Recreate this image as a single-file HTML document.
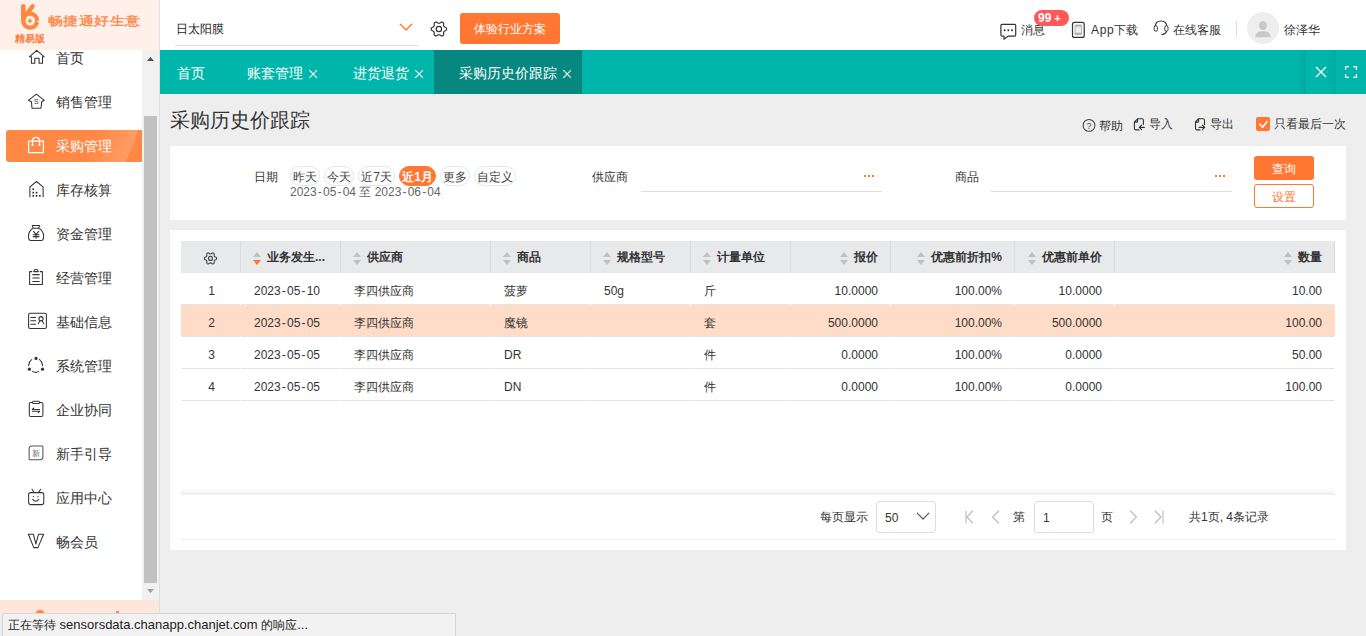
<!DOCTYPE html>
<html><head><meta charset="utf-8">
<style>
*{box-sizing:border-box;margin:0;padding:0}
html,body{width:1366px;height:636px;overflow:hidden;background:#eeeeee;font-family:"Liberation Sans",sans-serif;color:#333;font-size:12px}
.a{position:absolute;white-space:nowrap}
#logo{left:0;top:0;width:159px;height:50px;background:#fff1ea}
#hdr{left:160px;top:0;width:1206px;height:50px;background:#fff}
#vline{left:159px;top:0;width:1px;height:50px;background:#e3e3e3}
#side{left:0;top:50px;width:142px;height:550px;background:#fff}
#sbar{left:142px;top:50px;width:17px;height:550px;background:#f1f1f1}
#sthumb{left:144px;top:116px;width:13px;height:467px;background:#c1c1c1}
#sline{left:159px;top:50px;width:1px;height:563px;background:#dedede}
#sfoot{left:0;top:600px;width:159px;height:13px;background:#ffe6da}
.mi{left:56px;font-size:14px;line-height:20px;color:#333}
.ic{left:28px;width:16px;height:16px}
#act{left:6px;top:130px;width:136px;height:32px;border-radius:3px 0 0 3px;background:radial-gradient(circle 150px at -12.3px -40px,rgba(255,255,255,0) 112px,rgba(255,255,255,0.17) 149.2px,rgba(255,255,255,0) 150.2px),#ff8844}
#tabs{left:160px;top:50px;width:1206px;height:44px;background:#00b5aa}
.tab{top:63px;font-size:14px;line-height:20px;color:#fff}
#acttab{left:434px;top:50px;width:148px;height:44px;background:#06877f}
#panel1{left:170px;top:146px;width:1176px;height:74px;background:#fff}
#panel2{left:170px;top:230px;width:1176px;height:320px;background:#fff}
.pill{top:166px;height:20px;border:1px solid #d2eeee;border-radius:10px;font-size:12px;line-height:19px;padding-top:1px;text-align:center;color:#444}
table{position:absolute;left:181px;top:241px;border-collapse:separate;border-spacing:0;table-layout:fixed;width:1154px;font-size:12px}
th{height:32px;box-sizing:border-box;background:#e8e9eb;font-weight:bold;color:#333;border-right:1px solid #d9d9d9;padding:0 12px;text-align:left;white-space:nowrap}
td{height:32px;box-sizing:border-box;border-bottom:1px solid #e3e3e3;padding:5px 12px 0 13px;color:#333;white-space:nowrap;position:relative}
td:after{content:'';position:absolute;right:0;bottom:-1px;width:1px;height:1px;background:#fff}
.h{margin:0 1.15px}
th.r,td.r{text-align:right}
td.r{padding-right:13px}
th.c,td.c{text-align:center}
tr.hl td{background:#ffdcc7}
.sort{display:inline-block;width:8px;height:12px;position:relative;vertical-align:-1px;margin-right:6px;top:2px}
.sort:before{content:"";position:absolute;left:0;top:0;border-left:4px solid transparent;border-right:4px solid transparent;border-bottom:5px solid #c0c0c0}
.sort:after{content:"";position:absolute;left:0;top:8px;border-left:4px solid transparent;border-right:4px solid transparent;border-top:5px solid #c0c0c0}
.sort.on:after{border-top-color:#ff7a2f}
</style></head><body>
<div class="a" id="logo"></div>
<div class="a" id="hdr"></div>
<div class="a" id="vline"></div>
<div class="a" id="side"></div>
<div class="a" id="sbar"></div>
<div class="a" id="sthumb"></div>
<div class="a" id="sfoot"></div>
<div class="a" id="sline"></div>
<div class="a" style="left:36px;top:610px;width:8px;height:3px;background:#ff8a45;border-radius:3px 3px 0 0"></div>
<div class="a" style="left:116px;top:611px;width:3px;height:2px;background:#ff8a45"></div>

<!-- logo -->
<svg class="a" style="left:16px;top:0px" width="28" height="32" viewBox="0 0 28 32">
<g fill="none" stroke="#ff8840" stroke-linecap="round">
<path d="M7.3 6.2 V19" stroke-width="4.6"/>
<path d="M16.6 6.3 L11.5 13" stroke-width="4.4"/>
<circle cx="14.2" cy="20.7" r="7" stroke-width="4.3"/>
</g>
<path d="M13.9 18 Q14.4 20.4 16.8 20.9 Q14.4 21.4 13.9 23.8 Q13.4 21.4 11 20.9 Q13.4 20.4 13.9 18Z" fill="#ff8840"/>
<path d="M24 20 L20.4 21.6 L24 23.1Z" fill="#fff1ea"/>
</svg>
<div class="a" style="left:48px;top:13.5px;font-size:15px;line-height:18px;color:#f98f54;font-weight:bold;letter-spacing:0.4px;transform:scaleY(0.8);transform-origin:0 0">畅捷通好生意</div>
<div class="a" style="left:15px;top:33px;font-size:10px;line-height:12px;color:#ff7a3a;font-weight:bold">精易版</div>


<div class="a" id="act"></div>
<!-- sidebar icons -->
<svg class="a" style="left:0;top:0" width="160" height="600" viewBox="0 0 160 600">
<g fill="none" stroke="#333" stroke-width="1.05" stroke-linejoin="round" stroke-linecap="round">
<path d="M29.3 56.8 L36.7 50.4 L44.2 56.8 L42.5 56.8 L42.5 63.2 L39.1 63.2 L39.1 58.3 L34.8 58.3 L34.8 63.2 L31.4 63.2 L31.4 56.8 Z"/>
<path d="M28.4 100.3 L36.4 94.2 L44.3 100.3 L41.7 101.8 L41 108.3 L32 108.3 L31.4 101.8 Z"/>
<path d="M30 186.8 L36.5 181.5 L43 186.8 M29.9 187 V196.8 M43.1 187 V196.8"/>
<path d="M32.3 225.4 H39.6 L38.6 228.2 H33.3 Z M33.3 228.2 Q28.5 230.5 28.5 236.5 Q28.5 240.5 31 240.5 H41.2 Q43.6 240.5 43.6 236.5 Q43.6 230.5 38.6 228.2"/>
<path d="M33.5 231.4 L36.1 234.3 L38.8 231.4 M36.1 234.3 V238.3 M33.2 234.8 H39 M33.2 236.6 H39"/>
<path d="M31.8 271.6 H29.6 V284.4 H42.4 V271.6 H40.2 M33.7 271.6 Q34.2 269.2 36 269.2 Q37.8 269.2 38.3 271.6 Z M32.8 274.6 H39.3 M32.8 278 H39.3 M32.8 281.5 H39.3"/>
<rect x="28.6" y="313.3" width="17.8" height="15.2" rx="1.5"/>
<path d="M30.8 317.4 H35.6 M30.8 320.8 H35.6 M30.8 324.3 H35.6 M38.2 323.8 L40.2 320.5 M43.8 323.8 L41.8 320.5"/>
<circle cx="41" cy="318.7" r="2.1"/>
<path d="M28.6 365.6 Q29.3 361.3 31.6 359.6 M39.4 359.4 Q42 361.3 42.6 365.6 M32.3 371.4 Q35.6 373.3 38.8 371.4"/>
<path d="M32.4 402.4 H30.7 Q29.3 402.4 29.3 404 V415 Q29.3 416.5 30.7 416.5 H41.4 Q42.9 416.5 42.9 415 V404 Q42.9 402.4 41.4 402.4 H39.7 M33.5 401.3 H38.6 Q39.6 401.3 39.6 402.4 Q39.6 403.5 38.6 403.5 H33.5 Q32.5 403.5 32.5 402.4 Q32.5 401.3 33.5 401.3Z"/>
<path d="M32.3 409.4 H39.6 M33.8 408 L32.3 409.4 M32.3 411.3 H39.6 M38.1 412.7 L39.6 411.3"/>
<path d="M32 446 H42.2 Q42.9 446 42.9 446.7 V457 Q42.9 459.8 40.1 459.8 H29.8 Q29.1 459.8 29.1 459.1 V448.9 Q29.1 446 32 446Z" stroke="#555"/>
<rect x="28.6" y="492.6" width="15.2" height="12" rx="2"/>
<path d="M32 489.2 L34 492.4 M40.6 489.2 L38.6 492.4 M32.7 499.2 Q35.7 503.2 38.8 499.2"/>
<path d="M28.4 534.3 H33.4 L35.9 544 L38.5 534.3 H43.6 L37.9 547.6 H33.8 Z"/>
</g>
<g fill="#333">
<circle cx="36" cy="358.4" r="1.6"/><circle cx="29.4" cy="369.2" r="1.6"/><circle cx="42.5" cy="369.2" r="1.6"/>
<rect x="32.4" y="188.4" width="1.7" height="1.7"/><rect x="32.4" y="191.8" width="1.7" height="1.7"/><rect x="35.7" y="191.8" width="1.7" height="1.7"/>
<rect x="32.4" y="195" width="1.7" height="1.7"/><rect x="35.7" y="195" width="1.7" height="1.7"/><rect x="39" y="195" width="1.7" height="1.7"/>
<circle cx="33.5" cy="496.6" r="0.7"/><circle cx="38" cy="496.6" r="0.7"/>
</g>
<text x="36.4" y="104.2" font-size="7" text-anchor="middle" fill="#333" font-family="Liberation Sans">S</text>
<text x="36" y="455.8" font-size="8" text-anchor="middle" fill="#666">新</text>
<g fill="none" stroke="#fff" stroke-width="1.3" stroke-linejoin="round" stroke-linecap="round">
<rect x="28.6" y="141.2" width="14.8" height="11.5"/>
<path d="M32.5 145 V140.5 Q32.5 137.3 36 137.3 Q39.5 137.3 39.5 140.5 V145"/>
</g>
<circle cx="32.5" cy="145" r="1" fill="#fff"/><circle cx="39.5" cy="145" r="1" fill="#fff"/>
<path d="M147 61 L150.5 57 L154 61Z" fill="#505050"/>
<path d="M147 589 L150.5 593 L154 589Z" fill="#a0a0a0"/>
</svg>

<!-- sidebar -->
<div class="a mi" style="top:48px">首页</div>
<div class="a mi" style="top:92px">销售管理</div>
<div class="a mi" style="top:136px;color:#fff">采购管理</div>
<div class="a mi" style="top:180px">库存核算</div>
<div class="a mi" style="top:224px">资金管理</div>
<div class="a mi" style="top:268px">经营管理</div>
<div class="a mi" style="top:312px">基础信息</div>
<div class="a mi" style="top:356px">系统管理</div>
<div class="a mi" style="top:400px">企业协同</div>
<div class="a mi" style="top:444px">新手引导</div>
<div class="a mi" style="top:488px">应用中心</div>
<div class="a mi" style="top:532px">畅会员</div>

<!-- header -->
<div class="a" style="left:176px;top:21px;font-size:12px;line-height:16px;color:#222">日太阳膜</div>
<div class="a" style="left:175px;top:45px;width:243px;height:1px;background:#dcdcdc"></div>
<div class="a" style="left:460px;top:13px;width:100px;height:31px;background:#ff7733;border-radius:3px;color:#fff;font-size:12px;line-height:33px;text-align:center">体验行业方案</div>
<div class="a" style="left:1021px;top:22px;font-size:12px;line-height:16px">消息</div>
<div class="a" style="left:1034px;top:10px;width:35px;height:16px;background:#ff5858;border-radius:8px;color:#fff;font-size:12px;font-weight:bold;line-height:17px;padding-left:4px">99<span style="font-size:11px;margin-left:3px">+</span></div>
<div class="a" style="left:1091px;top:22px;font-size:12px;line-height:17px"><span style="letter-spacing:0.7px">App</span>下载</div>
<div class="a" style="left:1173px;top:22px;font-size:12px;line-height:16px">在线客服</div>
<div class="a" style="left:1236px;top:21px;width:1px;height:16px;background:#ddd"></div>
<div class="a" style="left:1247px;top:12px;width:32px;height:32px;border-radius:16px;background:#eeeeee"></div>
<div class="a" style="left:1284px;top:22px;font-size:12px;line-height:16px">徐泽华</div>

<!-- tabs -->
<div class="a" id="tabs"></div>
<div class="a" id="acttab"></div>
<div class="a" style="left:1298px;top:50px;width:8px;height:44px;background:linear-gradient(90deg,rgba(0,0,0,0),rgba(0,0,0,0.06))"></div>
<div class="a" style="left:1328px;top:50px;width:8px;height:44px;background:linear-gradient(90deg,rgba(0,0,0,0),rgba(0,0,0,0.06))"></div>
<div class="a tab" style="left:177px">首页</div>
<div class="a tab" style="left:247px">账套管理</div>
<div class="a tab" style="left:353px">进货退货</div>
<div class="a tab" style="left:459px">采购历史价跟踪</div>


<!-- header icons -->
<svg class="a" style="left:0;top:0" width="1366" height="94" viewBox="0 0 1366 94">
<path d="M400.3 24.2 L406 30 L411.7 24.2" fill="none" stroke="#ff7733" stroke-width="1.4" stroke-linecap="round" stroke-linejoin="round"/>
<g fill="none" stroke="#333" stroke-width="1.2" stroke-linejoin="round">
<path id="gear" d="M446.60 29.00 L446.48 29.66 L446.10 30.27 L445.37 30.73 L444.62 31.08 L444.15 31.45 L443.84 31.85 L443.65 32.32 L443.56 32.91 L443.64 33.74 L443.60 34.60 L443.26 35.23 L442.75 35.67 L442.11 35.89 L441.40 35.87 L440.63 35.47 L439.96 34.99 L439.41 34.77 L438.90 34.70 L438.39 34.77 L437.84 34.99 L437.17 35.47 L436.40 35.87 L435.69 35.89 L435.05 35.67 L434.54 35.23 L434.20 34.60 L434.16 33.74 L434.24 32.91 L434.15 32.32 L433.96 31.85 L433.65 31.45 L433.18 31.08 L432.43 30.73 L431.70 30.27 L431.32 29.66 L431.20 29.00 L431.32 28.34 L431.70 27.73 L432.43 27.27 L433.18 26.92 L433.65 26.55 L433.96 26.15 L434.15 25.68 L434.24 25.09 L434.16 24.26 L434.20 23.40 L434.54 22.77 L435.05 22.33 L435.69 22.11 L436.40 22.13 L437.17 22.53 L437.84 23.01 L438.39 23.23 L438.90 23.30 L439.41 23.23 L439.96 23.01 L440.63 22.53 L441.40 22.13 L442.11 22.11 L442.75 22.33 L443.26 22.77 L443.60 23.40 L443.64 24.26 L443.56 25.09 L443.65 25.68 L443.84 26.15 L444.15 26.55 L444.62 26.92 L445.37 27.27 L446.10 27.73 L446.48 28.34Z"/>
<circle cx="438.9" cy="29" r="2.7"/>
<path d="M1002 24.3 H1014.6 Q1015.7 24.3 1015.7 25.4 V35 Q1015.7 36.1 1014.6 36.1 H1008.3 L1004 39.2 L1004 36.1 H1002 Q1000.9 36.1 1000.9 35 V25.4 Q1000.9 24.3 1002 24.3Z"/>
<rect x="1072.5" y="22.4" width="11.7" height="15" rx="2"/>
<path d="M1155.3 26.5 Q1155.3 21 1161 21 Q1166.7 21 1166.7 26.5 M1166.5 31.2 Q1166 34.3 1161.5 34.6"/>
</g>
<defs><linearGradient id="apg" x1="0" y1="0" x2="0" y2="1"><stop offset="0" stop-color="#aaa"/><stop offset="0.25" stop-color="#e8e8e8"/><stop offset="0.7" stop-color="#f0f0f0"/><stop offset="1" stop-color="#999"/></linearGradient></defs>
<rect x="1075" y="25" width="6.6" height="9.6" rx="0.8" fill="url(#apg)" stroke="#8a8aa8" stroke-width="0.6"/>
<rect x="1154.2" y="25.8" width="3.2" height="5.4" rx="1.6" fill="#fff" stroke="#333" stroke-width="1"/>
<rect x="1164.8" y="25.8" width="3.2" height="5.4" rx="1.6" fill="#fff" stroke="#333" stroke-width="1"/>
<g fill="#333"><circle cx="1004.6" cy="30.2" r="1"/><circle cx="1008.3" cy="30.2" r="1"/><circle cx="1012" cy="30.2" r="1"/></g>
<path d="M1255 37.2 Q1255.5 32.3 1260.5 31.3 L1265.5 31.3 Q1270.5 32.3 1271 37.2Z" fill="#c9c9c9"/>
<ellipse cx="1263" cy="25.5" rx="4" ry="4.6" fill="#c9c9c9"/>
<g stroke="#fff" stroke-width="1.3" fill="none">
<path d="M1316 67 L1326 77 M1326 67 L1316 77"/>
<path d="M1345.6 70 V66.6 H1349 M1353 66.6 H1356.4 V70 M1356.4 74 V77.4 H1353 M1349 77.4 H1345.6 V74"/>
</g>
</svg>

<svg class="a" style="left:0;top:50px" width="600" height="44" viewBox="0 50 600 44"><g stroke="#fff" stroke-width="1.1" fill="none">
<path d="M309.3 70.2 L317 77.9 M317 70.2 L309.3 77.9"/>
<path d="M415.3 70.2 L423 77.9 M423 70.2 L415.3 77.9"/>
<path d="M563.3 70.2 L571 77.9 M571 70.2 L563.3 77.9"/>
</g></svg>
<!-- content -->
<div class="a" style="left:170px;top:108px;font-size:20px;line-height:24px;color:#333">采购历史价跟踪</div>
<div class="a" style="left:1099px;top:118px;font-size:12px;line-height:16px">帮助</div>
<div class="a" style="left:1149px;top:116px;font-size:12px;line-height:16px">导入</div>
<div class="a" style="left:1210px;top:116px;font-size:12px;line-height:16px">导出</div>
<div class="a" style="left:1256px;top:117px;width:14px;height:14px;background:#ff7733;border-radius:2px"></div>
<div class="a" style="left:1274px;top:116px;font-size:12px;line-height:16px">只看最后一次</div>

<div class="a" id="panel1"></div>
<div class="a" style="left:254px;top:169px;font-size:12px;line-height:16px">日期</div>
<div class="a pill" style="left:290px;width:30px">昨天</div>
<div class="a pill" style="left:324px;width:30px">今天</div>
<div class="a pill" style="left:358px;width:37px">近7天</div>
<div class="a pill" style="left:399px;width:37px;background:#ff7733;border-color:#ff7733;color:#fff;font-weight:bold">近1月</div>
<div class="a pill" style="left:440px;width:30px">更多</div>
<div class="a pill" style="left:474px;width:42px">自定义</div>
<div class="a" style="left:290px;top:184px;font-size:12px;line-height:16px;color:#666">2023<span class="h">-</span>05<span class="h">-</span>04 至 2023<span class="h">-</span>06<span class="h">-</span>04</div>
<div class="a" style="left:592px;top:169px;font-size:12px;line-height:16px">供应商</div>
<div class="a" style="left:641px;top:191px;width:241px;height:1px;background:#ddd"></div>
<div class="a" style="left:955px;top:169px;font-size:12px;line-height:16px">商品</div>
<div class="a" style="left:991px;top:191px;width:241px;height:1px;background:#ddd"></div>
<div class="a" style="left:1254px;top:156px;width:60px;height:24px;background:#ff7733;border-radius:3px;color:#fff;font-size:12px;line-height:26px;text-align:center">查询</div>
<div class="a" style="left:1254px;top:184px;width:60px;height:24px;border:1px solid #ff7733;border-radius:3px;color:#ff7733;font-size:12px;line-height:24px;text-align:center">设置</div>

<div class="a" id="panel2"></div>
<table>
<colgroup><col style="width:60px"><col style="width:100px"><col style="width:150px"><col style="width:100px"><col style="width:100px"><col style="width:100px"><col style="width:100px"><col style="width:124px"><col style="width:100px"><col style="width:220px"></colgroup>
<tr><th class="c"></th><th><span class="sort on"></span>业务发生...</th><th><span class="sort"></span>供应商</th><th><span class="sort"></span>商品</th><th><span class="sort"></span>规格型号</th><th><span class="sort"></span>计量单位</th><th class="r"><span class="sort"></span>报价</th><th class="r"><span class="sort"></span>优惠前折扣%</th><th class="r"><span class="sort"></span>优惠前单价</th><th class="r"><span class="sort"></span>数量</th></tr>
<tr><td class="c">1</td><td>2023<span class="h">-</span>05<span class="h">-</span>10</td><td>李四供应商</td><td>菠萝</td><td>50g</td><td>斤</td><td class="r">10.0000</td><td class="r">100.00%</td><td class="r">10.0000</td><td class="r">10.00</td></tr>
<tr class="hl"><td class="c">2</td><td>2023<span class="h">-</span>05<span class="h">-</span>05</td><td>李四供应商</td><td>魔镜</td><td></td><td>套</td><td class="r">500.0000</td><td class="r">100.00%</td><td class="r">500.0000</td><td class="r">100.00</td></tr>
<tr><td class="c">3</td><td>2023<span class="h">-</span>05<span class="h">-</span>05</td><td>李四供应商</td><td>DR</td><td></td><td>件</td><td class="r">0.0000</td><td class="r">100.00%</td><td class="r">0.0000</td><td class="r">50.00</td></tr>
<tr><td class="c">4</td><td>2023<span class="h">-</span>05<span class="h">-</span>05</td><td>李四供应商</td><td>DN</td><td></td><td>件</td><td class="r">0.0000</td><td class="r">100.00%</td><td class="r">0.0000</td><td class="r">100.00</td></tr>
</table>

<!-- pagination -->
<div class="a" style="left:181px;top:487px;width:1154px;height:8px;background:linear-gradient(180deg,rgba(0,0,0,0) 0%,rgba(0,0,0,0.03) 60%,rgba(0,0,0,0.075) 100%)"></div>
<div class="a" style="left:181px;top:539px;width:1154px;height:1px;background:#efefef"></div>
<div class="a" style="left:820px;top:509px;font-size:12px;line-height:16px">每页显示</div>
<div class="a" style="left:876px;top:501px;width:60px;height:32px;border:1px solid #ddd;border-radius:3px;background:#fff"></div>
<div class="a" style="left:885px;top:510px;font-size:12px;line-height:17px">50</div>
<div class="a" style="left:1013px;top:509px;font-size:12px;line-height:16px">第</div>
<div class="a" style="left:1034px;top:501px;width:60px;height:32px;border:1px solid #ddd;border-radius:3px;background:#fff"></div>
<div class="a" style="left:1043px;top:510px;font-size:12px;line-height:17px">1</div>
<div class="a" style="left:1101px;top:509px;font-size:12px;line-height:16px">页</div>
<div class="a" style="left:1189px;top:509px;font-size:12px;line-height:16px">共1页, 4条记录</div>


<!-- content icons -->
<svg class="a" style="left:0;top:0" width="1366" height="636" viewBox="0 0 1366 636">
<g fill="none" stroke="#444" stroke-width="1.1" stroke-linejoin="round">
<path d="M216.65 258.40 L216.55 258.93 L216.23 259.41 L215.62 259.77 L214.99 260.03 L214.61 260.32 L214.35 260.62 L214.21 261.00 L214.16 261.47 L214.25 262.15 L214.24 262.86 L213.98 263.37 L213.57 263.73 L213.06 263.90 L212.49 263.87 L211.87 263.52 L211.33 263.10 L210.89 262.91 L210.50 262.85 L210.11 262.91 L209.67 263.10 L209.13 263.52 L208.51 263.87 L207.94 263.90 L207.43 263.73 L207.02 263.37 L206.76 262.86 L206.75 262.15 L206.84 261.47 L206.79 261.00 L206.65 260.62 L206.39 260.32 L206.01 260.03 L205.38 259.77 L204.77 259.41 L204.45 258.93 L204.35 258.40 L204.45 257.87 L204.77 257.39 L205.38 257.03 L206.01 256.77 L206.39 256.48 L206.65 256.17 L206.79 255.80 L206.84 255.33 L206.75 254.65 L206.76 253.94 L207.02 253.43 L207.43 253.07 L207.94 252.90 L208.51 252.93 L209.13 253.28 L209.67 253.70 L210.11 253.89 L210.50 253.95 L210.89 253.89 L211.33 253.70 L211.87 253.28 L212.49 252.93 L213.06 252.90 L213.57 253.07 L213.98 253.43 L214.24 253.94 L214.25 254.65 L214.16 255.33 L214.21 255.80 L214.35 256.17 L214.61 256.48 L214.99 256.77 L215.62 257.03 L216.23 257.39 L216.55 257.87Z"/>
<circle cx="210.5" cy="258.4" r="2"/>
</g>
<g fill="none" stroke="#444" stroke-width="1.05">
<circle cx="1089" cy="125.4" r="5.9"/>
</g>
<text x="1089" y="128.8" font-size="9" text-anchor="middle" fill="#444" font-family="Liberation Sans">?</text>
<g fill="none" stroke="#333" stroke-width="1.1" stroke-linejoin="round" stroke-linecap="round">
<path d="M1143.4 124.5 V120.2 Q1143.4 118.7 1141.9 118.7 H1137.9 L1134.4 122 V128.4 Q1134.4 129.9 1135.9 129.9 H1139"/>
<path d="M1137.6 119.2 V121.6 Q1137.6 122.1 1137.1 122.1 H1134.8"/>
<path d="M1144.4 127.4 H1139.4 M1141.6 125.1 L1139.3 127.4 L1141.6 129.7"/>
<path d="M1204.5 124.6 V120.2 Q1204.5 118.7 1203 118.7 H1198.6 L1195.5 122 V128.4 Q1195.5 129.9 1197 129.9 H1200"/>
<path d="M1198.6 119.2 V121.6 Q1198.6 122.1 1198.1 122.1 H1195.9"/>
<path d="M1199.2 127.4 H1204.4 M1202.4 125.1 L1204.7 127.4 L1202.4 129.7"/>
</g>
<path d="M1259.6 124 L1262.6 127.2 L1267 121.4" fill="none" stroke="#fff" stroke-width="1.6" stroke-linecap="round" stroke-linejoin="round"/>
<g fill="#ff7a2f">
<rect x="864" y="175" width="2" height="2"/><rect x="868" y="175" width="2" height="2"/><rect x="872" y="175" width="2" height="2"/>
<rect x="1215" y="175" width="2" height="2"/><rect x="1219" y="175" width="2" height="2"/><rect x="1223" y="175" width="2" height="2"/>
</g>
<g fill="none" stroke="#555" stroke-width="1.2" stroke-linecap="round" stroke-linejoin="round">
<path d="M917.3 513.2 L923 519.2 L928.8 513.2"/>
</g>
<g fill="none" stroke="#bbb" stroke-width="1.1" stroke-linecap="round" stroke-linejoin="round">
<path d="M966 511 V523 M972.6 511 L967 517 L972.6 523"/>
<path d="M998.6 511 L992.6 517 L998.6 523"/>
<path d="M1130.4 511 L1136.4 517 L1130.4 523"/>
<path d="M1155.2 511 L1161 517 L1155.2 523 M1163 511 V523"/>
</g>
</svg>

<!-- status bar -->
<div class="a" style="left:2px;top:613px;width:454px;height:23px;background:#f2f2f2;border-top:1px solid #d4d4d4;border-left:1px solid #d4d4d4;border-right:1px solid #d4d4d4;border-radius:2px 2px 0 0;font-size:13px;line-height:22px;padding-left:5px;color:#222"><span style="font-size:12px">正在等待</span> sensorsdata.chanapp.chanjet.com <span style="font-size:12px">的响应</span>...</div>
</body></html>
